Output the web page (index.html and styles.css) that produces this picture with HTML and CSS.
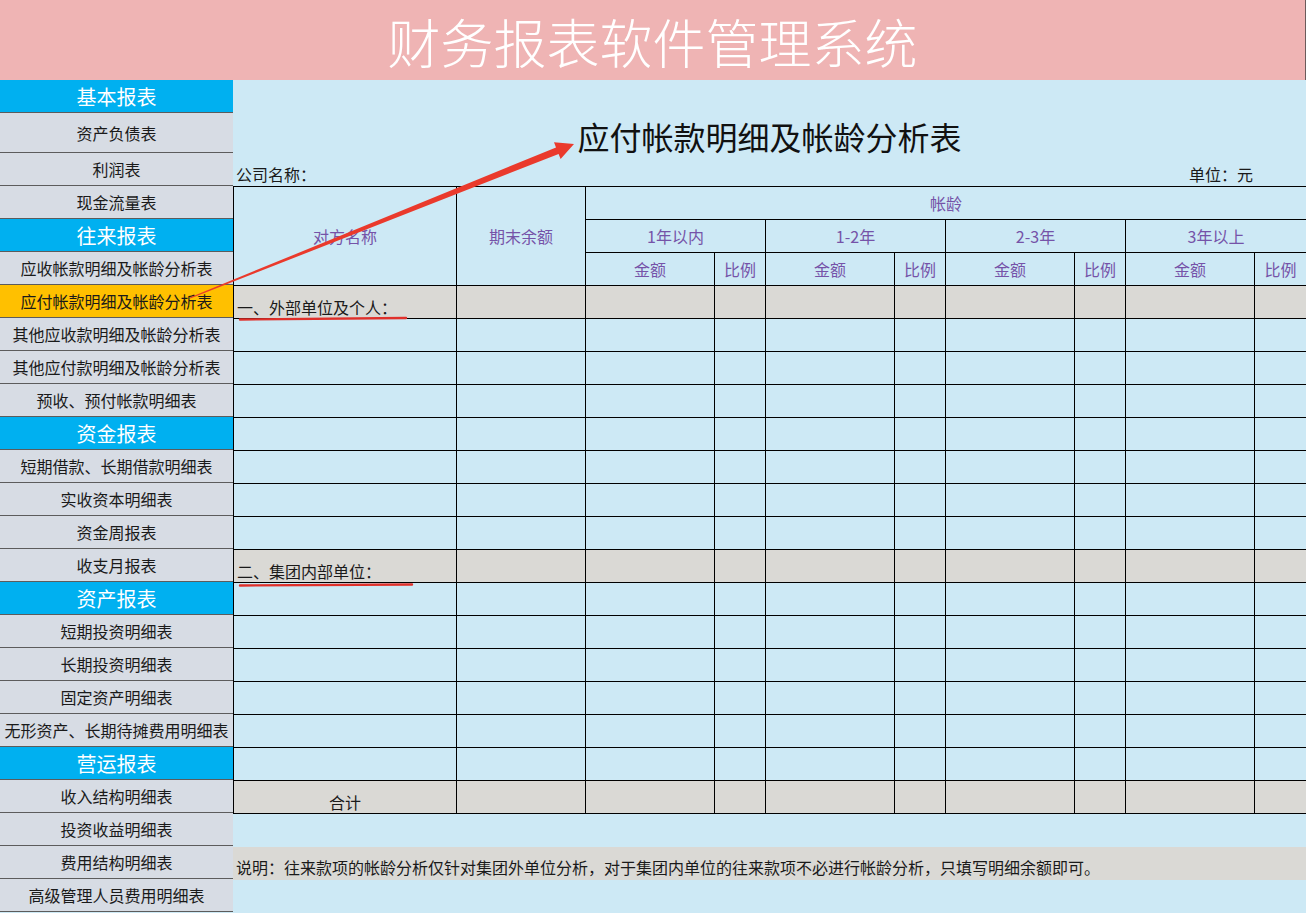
FILE: index.html
```html
<!DOCTYPE html>
<html lang="zh-CN">
<head>
  <meta charset="UTF-8">
  <title>财务报表软件管理系统 - 应付帐款明细及帐龄分析表</title>
  <meta name="viewport" content="width=device-width, initial-scale=1.0">
  <link rel="stylesheet" href="styles.css">
</head>
<body>

<div class="app">
  <header class="topbar">
    <h1>财务报表软件管理系统</h1>
  </header>

  <div class="layout">
    <nav class="sidebar">
      <div class="nav-group">基本报表</div>
      <a class="nav-item nav-tall">资产负债表</a>
      <a class="nav-item">利润表</a>
      <a class="nav-item">现金流量表</a>
      <div class="nav-group">往来报表</div>
      <a class="nav-item">应收帐款明细及帐龄分析表</a>
      <a class="nav-item active">应付帐款明细及帐龄分析表</a>
      <a class="nav-item">其他应收款明细及帐龄分析表</a>
      <a class="nav-item">其他应付款明细及帐龄分析表</a>
      <a class="nav-item">预收、预付帐款明细表</a>
      <div class="nav-group">资金报表</div>
      <a class="nav-item">短期借款、长期借款明细表</a>
      <a class="nav-item">实收资本明细表</a>
      <a class="nav-item">资金周报表</a>
      <a class="nav-item">收支月报表</a>
      <div class="nav-group">资产报表</div>
      <a class="nav-item">短期投资明细表</a>
      <a class="nav-item">长期投资明细表</a>
      <a class="nav-item">固定资产明细表</a>
      <a class="nav-item">无形资产、长期待摊费用明细表</a>
      <div class="nav-group">营运报表</div>
      <a class="nav-item">收入结构明细表</a>
      <a class="nav-item">投资收益明细表</a>
      <a class="nav-item">费用结构明细表</a>
      <a class="nav-item">高级管理人员费用明细表</a>
    </nav>

    <main class="sheet">
      <div class="sheet-title">应付帐款明细及帐龄分析表</div>
      <div class="sheet-info">
        <span>公司名称：</span>
        <span>单位：元</span>
      </div>

      <table class="report">
        <colgroup>
          <col class="c-name"><col class="c-amt">
          <col class="c-amt"><col class="c-pct">
          <col class="c-amt"><col class="c-pct">
          <col class="c-amt"><col class="c-pct">
          <col class="c-amt"><col class="c-pct-last">
        </colgroup>
        <thead>
          <tr>
            <th rowspan="3">对方名称</th>
            <th rowspan="3">期末余额</th>
            <th colspan="8">帐龄</th>
          </tr>
          <tr>
            <th colspan="2">1年以内</th>
            <th colspan="2">1-2年</th>
            <th colspan="2">2-3年</th>
            <th colspan="2">3年以上</th>
          </tr>
          <tr>
            <th>金额</th><th>比例</th>
            <th>金额</th><th>比例</th>
            <th>金额</th><th>比例</th>
            <th>金额</th><th>比例</th>
          </tr>
        </thead>
        <tbody>
          <tr class="section"><td>一、外部单位及个人：</td><td></td><td></td><td></td><td></td><td></td><td></td><td></td><td></td><td></td></tr>
          <tr><td></td><td></td><td></td><td></td><td></td><td></td><td></td><td></td><td></td><td></td></tr>
          <tr><td></td><td></td><td></td><td></td><td></td><td></td><td></td><td></td><td></td><td></td></tr>
          <tr><td></td><td></td><td></td><td></td><td></td><td></td><td></td><td></td><td></td><td></td></tr>
          <tr><td></td><td></td><td></td><td></td><td></td><td></td><td></td><td></td><td></td><td></td></tr>
          <tr><td></td><td></td><td></td><td></td><td></td><td></td><td></td><td></td><td></td><td></td></tr>
          <tr><td></td><td></td><td></td><td></td><td></td><td></td><td></td><td></td><td></td><td></td></tr>
          <tr><td></td><td></td><td></td><td></td><td></td><td></td><td></td><td></td><td></td><td></td></tr>
          <tr class="section"><td>二、集团内部单位：</td><td></td><td></td><td></td><td></td><td></td><td></td><td></td><td></td><td></td></tr>
          <tr><td></td><td></td><td></td><td></td><td></td><td></td><td></td><td></td><td></td><td></td></tr>
          <tr><td></td><td></td><td></td><td></td><td></td><td></td><td></td><td></td><td></td><td></td></tr>
          <tr><td></td><td></td><td></td><td></td><td></td><td></td><td></td><td></td><td></td><td></td></tr>
          <tr><td></td><td></td><td></td><td></td><td></td><td></td><td></td><td></td><td></td><td></td></tr>
          <tr><td></td><td></td><td></td><td></td><td></td><td></td><td></td><td></td><td></td><td></td></tr>
          <tr><td></td><td></td><td></td><td></td><td></td><td></td><td></td><td></td><td></td><td></td></tr>
          <tr class="section total"><td>合计</td><td></td><td></td><td></td><td></td><td></td><td></td><td></td><td></td><td></td></tr>
        </tbody>
      </table>

      <div class="blank-row"></div>
      <div class="note-row">说明：往来款项的帐龄分析仅针对集团外单位分析，对于集团内单位的往来款项不必进行帐龄分析，只填写明细余额即可。</div>
    </main>
  </div>

  <!-- 标注：箭头和下划线 -->
  <svg class="marks" width="1306" height="913" viewBox="0 0 1306 913">
    <polygon points="190.2,298.6 558.6,153.9 560.6,159.1 574,144 554,142.3 556,147.4 189.8,297.4" fill="#ea3a2c"/>
    <path d="M240 319.5 Q320 318.5 406 318" stroke="#e0302a" stroke-width="2.4" fill="none" stroke-linecap="round"/>
    <path d="M240 585.5 Q330 585 412 584.5" stroke="#e0302a" stroke-width="2.4" fill="none" stroke-linecap="round"/>
  </svg>
</div>

</body>
</html>
```

FILE: styles.css
```css
body { margin: 0; font-family: "Noto Sans CJK SC", "Noto Sans", sans-serif; color: #1a1a1a; background: #cde9f5; }
.app { position: relative; width: 1306px; height: 913px; overflow: hidden; background: #cde9f5; }

.topbar {
  height: 80px;
  background-color: #efb4b4;
  border-right: 1px solid #6b5b5b;
  box-sizing: border-box;
  display: flex; align-items: center; justify-content: center;
}
.topbar h1 { margin: 0; font-size: 53px; font-weight: 300; color: #fff; letter-spacing: 0; line-height: 1; padding-top: 2px; }

.layout { display: grid; grid-template-columns: 233px 1073px; }

.sidebar { display: flex; flex-direction: column; }
.nav-group, .nav-item {
  height: 33px;
  box-sizing: border-box;
  border-bottom: 1px solid #5c5c5c;
  display: flex; align-items: center; justify-content: center;
  white-space: nowrap;
}
.nav-group { background-color: #00b0f0; color: #fff; font-size: 20px; }
.nav-item { background-color: #d7dce4; color: #1a1a1a; font-size: 16px; cursor: pointer; }
.nav-item.nav-tall { height: 40px; }
.nav-item.active { background-color: #ffc000; }

.sheet { display: flex; flex-direction: column; }
.sheet-title { height: 73px; display: flex; align-items: flex-end; justify-content: center; font-size: 32px; line-height: 34px; color: #111; }
.sheet-info {
  height: 33px; box-sizing: border-box;
  display: flex; justify-content: space-between; align-items: flex-end;
  padding: 0 53px 2px 3px;
  font-size: 16px; line-height: 20px;
}

.report { border-collapse: collapse; table-layout: fixed; width: 1073px; }
.c-name { width: 223px; }
.c-amt { width: 129px; }
.c-pct { width: 51px; }
.c-pct-last { width: 52px; }
.report tr { height: 33px; }
.report th, .report td { border: 1px solid #000; padding: 0; }
.report th { font-weight: normal; font-size: 16px; color: #7553a8; text-align: center; vertical-align: middle; }
.report td { font-size: 16px; line-height: 20px; }
.report .section td { background-color: #dad9d5; vertical-align: bottom; padding: 0 3px 1px; white-space: nowrap; }
.report .total td:first-child { text-align: center; }

.blank-row { height: 33px; }
.note-row { height: 33px; box-sizing: border-box; background-color: #dad9d5; display: flex; align-items: flex-end; padding: 0 3px 2px; font-size: 16px; line-height: 22px; }

.marks { position: absolute; top: 0; left: 0; pointer-events: none; }
```
